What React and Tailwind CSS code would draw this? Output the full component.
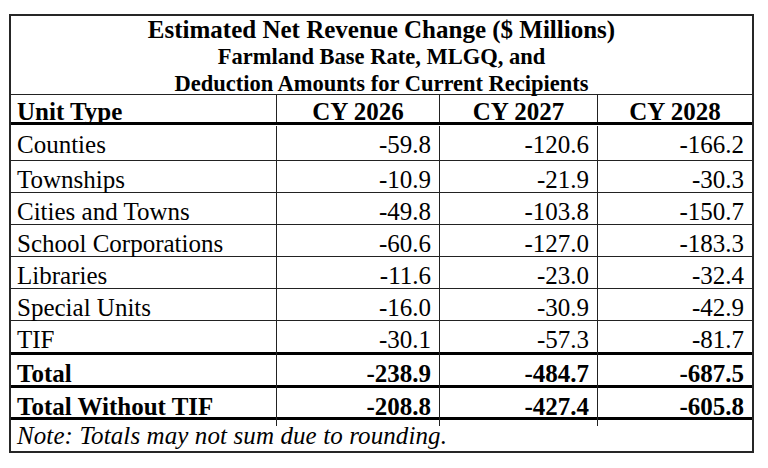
export default function App() {
  const rows = [
    ["Counties", "-59.8", "-120.6", "-166.2", "h-[36px] pt-[1px]"],
    ["Townships", "-10.9", "-21.9", "-30.3", "h-[32px] pb-[3px]"],
    ["Cities and Towns", "-49.8", "-103.8", "-150.7", "h-[32px]"],
    ["School Corporations", "-60.6", "-127.0", "-183.3", "h-[32px]"],
    ["Libraries", "-11.6", "-23.0", "-32.4", "h-[32px]"],
    ["Special Units", "-16.0", "-30.9", "-42.9", "h-[32px]"],
  ];
  const grid = "grid grid-cols-[265px_163px_158px_155px]";
  const num = "border-l border-[#222] flex items-center justify-end pr-[8px]";
  const first = "flex items-center pl-[6px]";
  return (
    <div className="w-[768px] h-[468px] bg-white overflow-hidden pt-[14px] pl-[9px] text-black font-['Liberation_Serif','Times_New_Roman',serif]">
      <div className="w-[745px] border-2 border-[#262626]">
        <div className="h-[79px] border-b border-[#222] text-center font-bold leading-[27px]">
          <div className="text-[25px]">Estimated Net Revenue Change ($ Millions)</div>
          <div className="text-[22.5px]">Farmland Base Rate, MLGQ, and</div>
          <div className="text-[22.5px]">Deduction Amounts for Current Recipients</div>
        </div>
        <div className={`${grid} h-[30px] border-b-[3px] border-black font-bold text-[25px]`}>
          <div className="flex items-end pl-[6px] leading-[20px]">Unit Type</div>
          <div className="border-l border-[#222] flex items-end justify-center leading-[20px]">CY 2026</div>
          <div className="border-l border-[#222] flex items-end justify-center leading-[20px]">CY 2027</div>
          <div className="border-l border-[#222] flex items-end justify-center leading-[20px]">CY 2028</div>
        </div>
        {rows.map((r) => (
          <div key={r[0]} className={`${grid} ${r[4]} border-b border-[#222] text-[25px]`}>
            <div className={first}>{r[0]}</div>
            <div className={num}>{r[1]}</div>
            <div className={num}>{r[2]}</div>
            <div className={num}>{r[3]}</div>
          </div>
        ))}
        <div className={`${grid} h-[34px] border-b-[3px] border-black text-[25px]`}>
          <div className={first}>TIF</div>
          <div className={num}>-30.1</div>
          <div className={num}>-57.3</div>
          <div className={num}>-81.7</div>
        </div>
        <div className={`${grid} h-[33px] border-b-[3px] border-black text-[25px] font-bold`}>
          <div className={first}>Total</div>
          <div className={num}>-238.9</div>
          <div className={num}>-484.7</div>
          <div className={num}>-687.5</div>
        </div>
        <div className={`${grid} h-[32px] pb-[3px] border-b-[3px] border-black text-[25px] font-bold`}>
          <div className={first}>Total Without TIF</div>
          <div className={num}>-208.8</div>
          <div className={num}>-427.4</div>
          <div className={num}>-605.8</div>
        </div>
        <div className="h-[31px] flex items-center pl-[6px] italic text-[25px] tracking-[0.1px]">
          Note: Totals may not sum due to rounding.
        </div>
      </div>
    </div>
  );
}
